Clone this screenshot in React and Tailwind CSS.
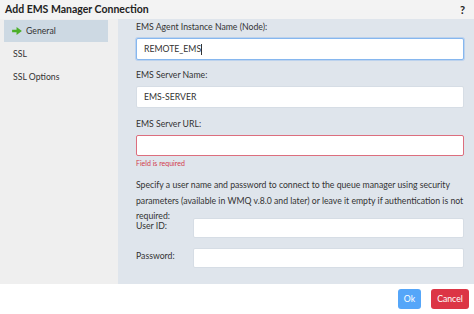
export default function App() {
  return (
    <div
      className="w-[474px] h-[314px] flex flex-col bg-white text-[#333] overflow-hidden"
      style={{ fontFamily: 'Lato, "Open Sans", sans-serif' }}
    >
      {/* Title bar */}
      <div className="h-[19px] flex items-center justify-between px-[5px] bg-[#f3f3f3]">
        <span className="text-[10.5px] font-bold text-[#222] leading-none">Add EMS Manager Connection</span>
        <span className="text-[11px] font-bold text-[#222] leading-none pr-[4px]">?</span>
      </div>

      {/* Body */}
      <div className="h-[265px] flex">
        {/* Sidebar */}
        <div className="w-[118px] bg-[#efefef] pt-[1px] px-[4px] pr-[10px] text-[8.7px]">
          <div className="h-[22px] flex items-center gap-[4px] pl-[8px] bg-[#cdd9e3]">
            <svg width="10" height="8" viewBox="0 0 11 9">
              <path d="M0 3h5V0l6 4.5L5 9V6H0z" fill="#4caf28" />
            </svg>
            <span>General</span>
          </div>
          <div className="h-[23px] flex items-center pl-[9px]">SSL</div>
          <div className="h-[23px] flex items-center pl-[9px]">SSL Options</div>
        </div>

        {/* Form panel */}
        <div className="flex-1 bg-[#dfe5ec] pl-[18px] pr-[10px] pt-[1px] text-[8.7px]">
          <div className="leading-[14px]">EMS Agent Instance Name (Node):</div>
          <div className="mt-[4px] h-[22px] bg-white border border-[#86b7ef] rounded-[2px] flex items-center px-[7px] shadow-[0_0_0_1px_rgba(134,183,239,0.4)]">
            REMOTE_EMS<span className="w-px h-[11px] bg-[#333]"></span>
          </div>

          <div className="leading-[14px] mt-[8px]">EMS Server Name:</div>
          <div className="mt-[4px] h-[22px] bg-white border border-[#d6dde5] rounded-[2px] flex items-center px-[7px]">
            EMS-SERVER
          </div>

          <div className="leading-[14px] mt-[9px]">EMS Server URL:</div>
          <div className="mt-[4px] h-[21px] bg-white border border-[#dc6e7e] rounded-[2px]"></div>
          <div className="text-[7px] leading-[12px] text-[#d23a4c] mt-[1px]">Field is required</div>

          <div className="leading-[15.5px] mt-[8px]">
            Specify a user name and password to connect to the queue manager using security
            <br />
            parameters (available in WMQ v.8.0 and later) or leave it empty if authentication is not
            <br />
            required:
          </div>

          <div className="flex items-start mt-[-5.5px]">
            <div className="w-[57px] leading-[14px] pt-[1px]">User ID:</div>
            <div className="flex-1 h-[20px] bg-white border border-[#d6dde5] rounded-[2px]"></div>
          </div>
          <div className="flex items-start mt-[10px]">
            <div className="w-[57px] leading-[14px] pt-[1px]">Password:</div>
            <div className="flex-1 h-[20px] bg-white border border-[#d6dde5] rounded-[2px]"></div>
          </div>
        </div>
      </div>

      {/* Footer */}
      <div className="flex-1 flex items-center justify-end gap-[10px] pr-[5px] text-[8.7px]">
        <button className="w-[23px] h-[20px] rounded-[3px] bg-[#55a6f9] text-white">Ok</button>
        <button className="w-[38px] h-[20px] rounded-[3px] bg-[#dc3545] text-white">Cancel</button>
      </div>
    </div>
  );
}
